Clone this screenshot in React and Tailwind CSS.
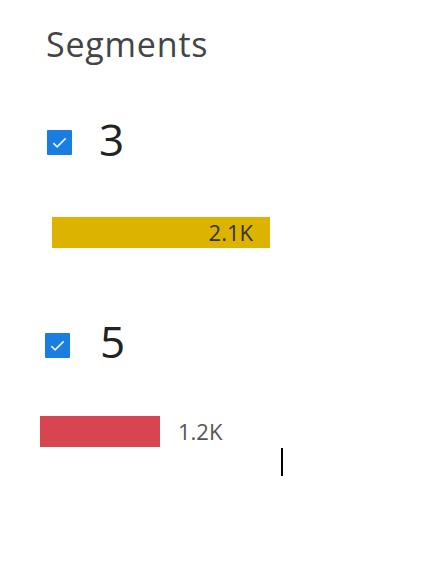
export default function App() {
  const font = { fontFamily: '"Open Sans", "Noto Sans", sans-serif' };
  const Check = () => (
    <div className="w-[25px] h-[25px] bg-[#1a7ee0] flex items-center justify-center rounded-[1px]">
      <svg width="19" height="19" viewBox="0 0 16 16">
        <path d="M2.8 8.6 L6 11.6 L13.2 4.6" fill="none" stroke="#e8f2ff" strokeWidth="1.4" />
      </svg>
    </div>
  );
  return (
    <div className="w-[435px] h-[564px] bg-white relative" style={font}>
      <div className="pt-[22px] pl-[46px] text-[34px] leading-[44px] text-[#444] font-medium tracking-[0.8px]">Segments</div>
      <div className="flex items-center mt-[54px] ml-[47px] h-[44px]">
        <Check />
        <span className="ml-[27px] text-[44px] leading-[44px] font-normal text-[#222] -mt-[6px]">3</span>
      </div>
      <div className="mt-[53px] ml-[52px] w-[218px] h-[31px] bg-[#dcb400] flex items-center justify-end pr-[17px] text-[22px] text-[#333]">2.1K</div>
      <div className="flex items-center mt-[75px] ml-[45px] h-[44px]">
        <Check />
        <span className="ml-[30px] text-[44px] leading-[44px] font-normal text-[#222] -mt-[8px]">5</span>
      </div>
      <div className="flex items-center mt-[48px] ml-[40px]">
        <div className="w-[120px] h-[31px] bg-[#d64550]" />
        <span className="ml-[18px] text-[22px] text-[#555]">1.2K</span>
      </div>
      <div className="ml-[281px] mt-[0px] w-[1.5px] h-[28px] bg-black" />
    </div>
  );
}
